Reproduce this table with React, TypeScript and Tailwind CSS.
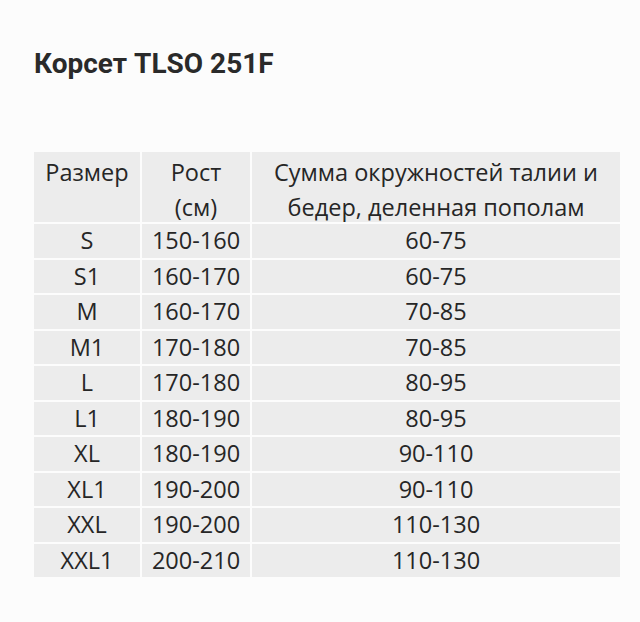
import { Fragment } from 'react';

const rows: [string, string, string][] = [
  ['S', '150-160', '60-75'],
  ['S1', '160-170', '60-75'],
  ['M', '160-170', '70-85'],
  ['M1', '170-180', '70-85'],
  ['L', '170-180', '80-95'],
  ['L1', '180-190', '80-95'],
  ['XL', '180-190', '90-110'],
  ['XL1', '190-200', '90-110'],
  ['XXL', '190-200', '110-130'],
  ['XXL1', '200-210', '110-130'],
];

export default function App() {
  return (
    <div className="w-[640px] h-[622px] bg-[#fcfcfc] pt-[47px] pl-[34px] overflow-hidden">
      <h1 className="text-[28px] leading-[34px] font-bold text-[#2a2a2a] font-['Roboto',sans-serif]">
        Корсет TLSO 251F
      </h1>
      <div className="mt-[71px] grid grid-cols-[106px_108px_368px] gap-[2px] text-[23.5px] text-[#262626] font-['Open_Sans',sans-serif] text-center">
        <div className="bg-[#ececec] h-[70px] leading-[35px] pt-[3px]">Размер</div>
        <div className="bg-[#ececec] h-[70px] leading-[35px] pt-[3px]">
          Рост
          <br />
          (см)
        </div>
        <div className="bg-[#ececec] h-[70px] leading-[35px] pt-[3px]">
          Сумма окружностей талии и
          <br />
          бедер, деленная пополам
        </div>
        {rows.map((r) => (
          <Fragment key={r[0]}>
            <div className="bg-[#ececec] h-[33.5px] leading-[33.5px]">{r[0]}</div>
            <div className="bg-[#ececec] h-[33.5px] leading-[33.5px]">{r[1]}</div>
            <div className="bg-[#ececec] h-[33.5px] leading-[33.5px]">{r[2]}</div>
          </Fragment>
        ))}
      </div>
    </div>
  );
}
